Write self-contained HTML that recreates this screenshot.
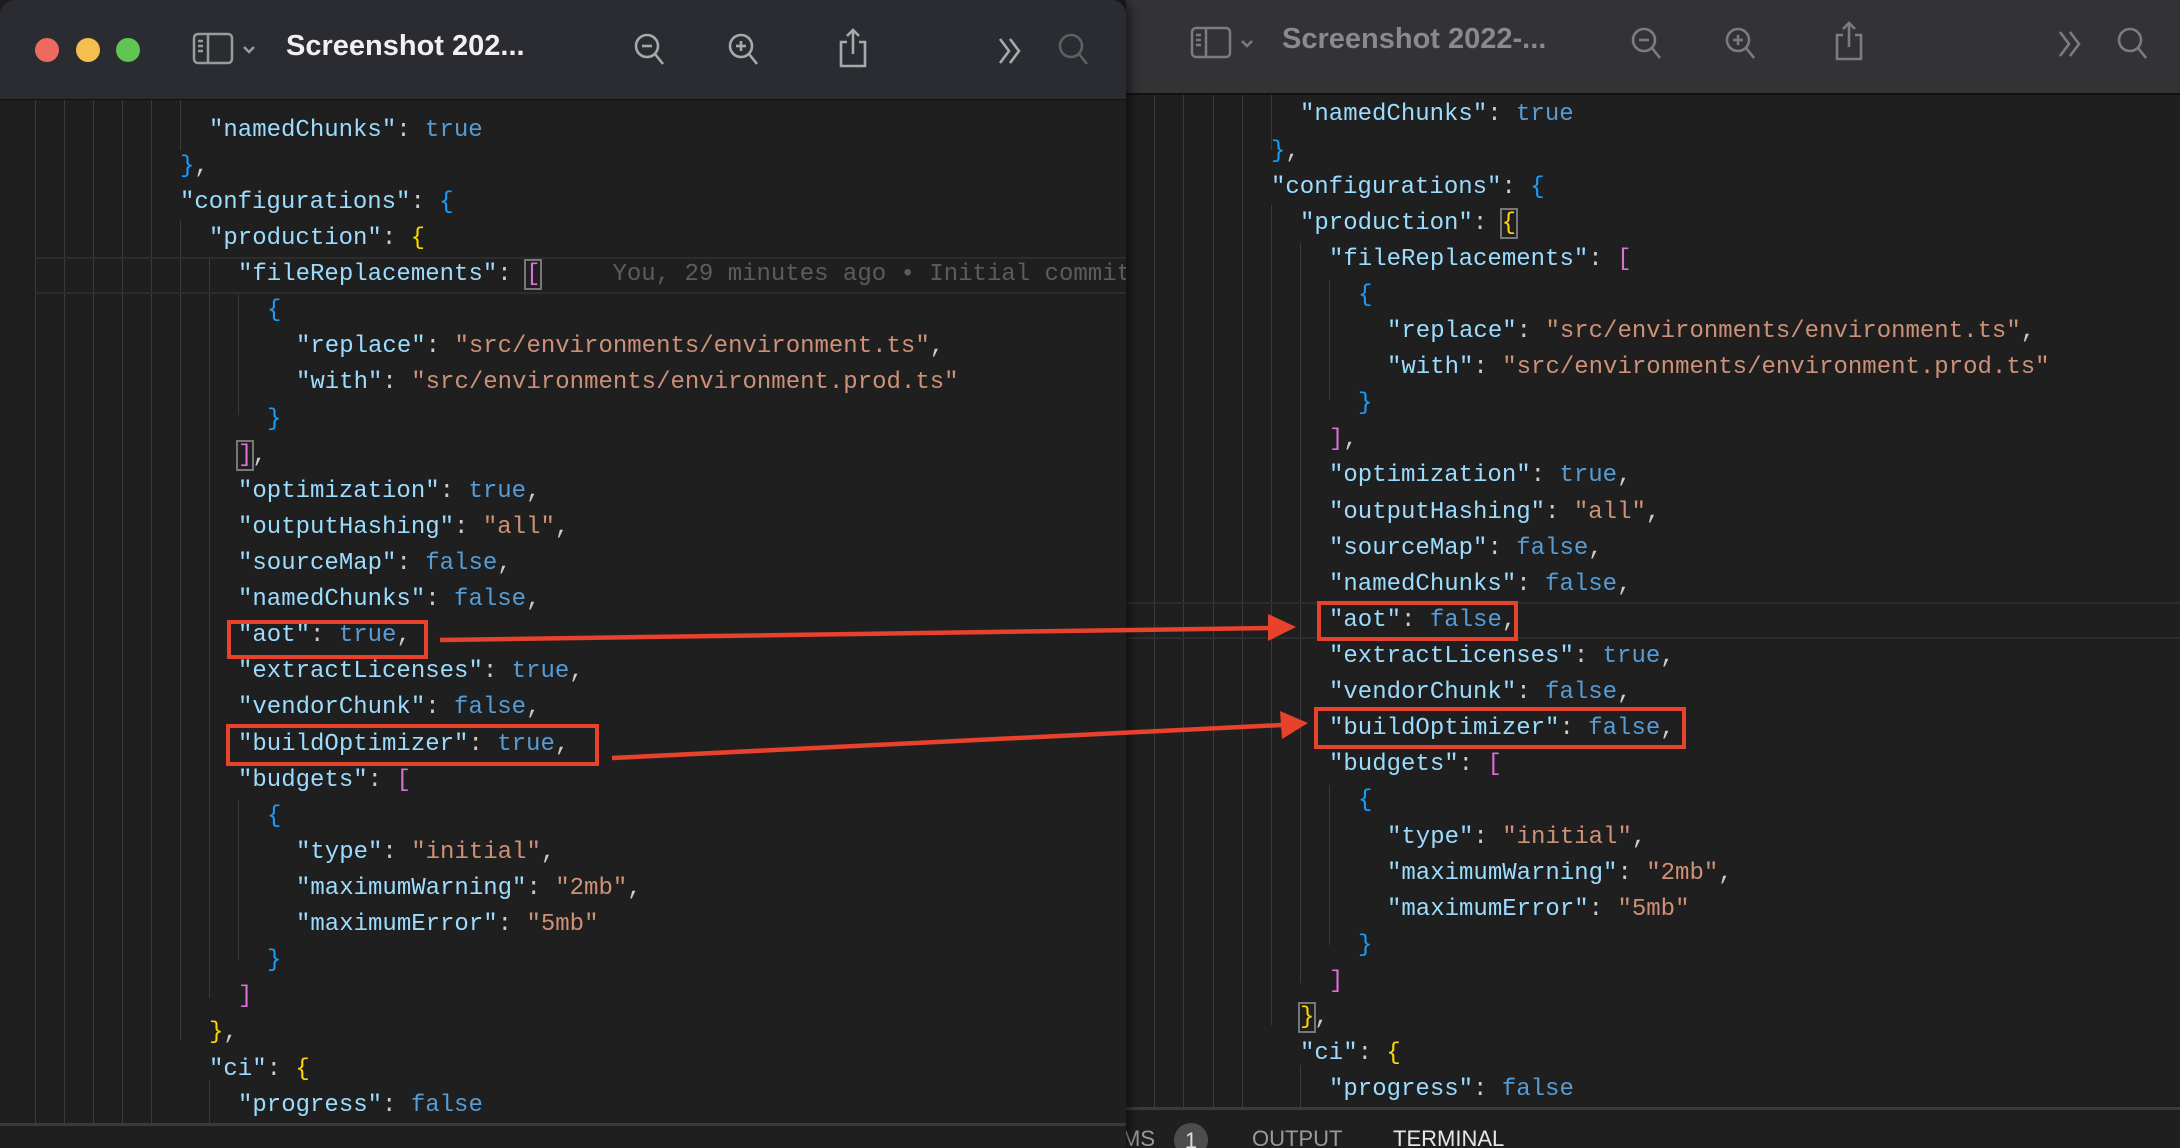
<!DOCTYPE html>
<html><head><meta charset="utf-8"><style>
*{margin:0;padding:0;box-sizing:border-box}
body{width:2180px;height:1148px;overflow:hidden;background:#1e1e1e;position:relative;font-family:"Liberation Mono",monospace}
.win{position:absolute;top:0;overflow:hidden}
#L{left:0;width:1126px;height:1148px;background:#1f1f1f;border-radius:14px 14px 0 0;z-index:2;box-shadow:4px 0 10px rgba(0,0,0,.5)}
#R{left:1126px;width:1054px;height:1148px;background:#1f1f1f;z-index:1}
.tb{position:absolute;left:0;top:0;width:100%;}
#L .tb{height:100px;background:#2a2c31;border-bottom:1px solid #111}
#R .tb{height:95px;background:#333335;border-bottom:2px solid #111}
.code{position:absolute;left:0;width:100%;font-size:24px}
.ln{height:36.12px;line-height:36px;position:relative;white-space:pre}
.k{color:#9cdcfe}.p{color:#cccccc}.b{color:#569cd6}.s{color:#ce9178}.y{color:#ffd700}.bl{color:#179fff}.pk{color:#da70d6}
.g{position:absolute;width:1px;background:#3b3b3b}
.title{position:absolute;font-family:"Liberation Sans",sans-serif;font-weight:bold;font-size:29px}
.ic{position:absolute}
.panel{position:absolute;left:0;width:100%;background:#1f1f1f;border-top:3px solid #3a3a3a}
.box{position:absolute;border:4px solid #e8412c;z-index:5}
</style></head><body>

<div class="win" id="L">
  <div class="g" style="left:35px;top:100px;height:1025px"></div>
  <div class="g" style="left:64px;top:100px;height:1025px"></div>
  <div class="g" style="left:93px;top:100px;height:1025px"></div>
  <div class="g" style="left:122px;top:100px;height:1025px"></div>
  <div class="g" style="left:151px;top:100px;height:1025px"></div>
  <div class="g" style="left:180px;top:100px;height:50px"></div>
  <div class="g" style="left:180px;top:220px;height:820px"></div>
  <div class="g" style="left:209px;top:258px;height:740px"></div>
  <div class="g" style="left:209px;top:1080px;height:45px"></div>
  <div class="g" style="left:238px;top:295px;height:120px"></div>
  <div class="g" style="left:238px;top:800px;height:160px"></div>
  <div style="position:absolute;left:35px;top:257px;width:1100px;height:37px;border-top:2px solid #2c2c2c;border-bottom:2px solid #2c2c2c"></div>
  <div class="code" style="top:112.7px"><div class="ln" style="padding-left:209px"><span class="k">"namedChunks"</span><span class="p">: </span><span class="b">true</span></div><div class="ln" style="padding-left:180px"><span class="bl">}</span><span class="p">,</span></div><div class="ln" style="padding-left:180px"><span class="k">"configurations"</span><span class="p">: </span><span class="bl">{</span></div><div class="ln" style="padding-left:209px"><span class="k">"production"</span><span class="p">: </span><span class="y">{</span></div><div class="ln" style="padding-left:238px"><span class="k">"fileReplacements"</span><span class="p">: </span><span class="pk" style="outline:2px solid #777">[</span><span style="color:#5c5c5c">     You, 29 minutes ago • Initial commit</span></div><div class="ln" style="padding-left:267px"><span class="bl">{</span></div><div class="ln" style="padding-left:296px"><span class="k">"replace"</span><span class="p">: </span><span class="s">"src/environments/environment.ts"</span><span class="p">,</span></div><div class="ln" style="padding-left:296px"><span class="k">"with"</span><span class="p">: </span><span class="s">"src/environments/environment.prod.ts"</span></div><div class="ln" style="padding-left:267px"><span class="bl">}</span></div><div class="ln" style="padding-left:238px"><span class="pk" style="outline:2px solid #777">]</span><span class="p">,</span></div><div class="ln" style="padding-left:238px"><span class="k">"optimization"</span><span class="p">: </span><span class="b">true</span><span class="p">,</span></div><div class="ln" style="padding-left:238px"><span class="k">"outputHashing"</span><span class="p">: </span><span class="s">"all"</span><span class="p">,</span></div><div class="ln" style="padding-left:238px"><span class="k">"sourceMap"</span><span class="p">: </span><span class="b">false</span><span class="p">,</span></div><div class="ln" style="padding-left:238px"><span class="k">"namedChunks"</span><span class="p">: </span><span class="b">false</span><span class="p">,</span></div><div class="ln" style="padding-left:238px"><span class="k">"aot"</span><span class="p">: </span><span class="b">true</span><span class="p">,</span></div><div class="ln" style="padding-left:238px"><span class="k">"extractLicenses"</span><span class="p">: </span><span class="b">true</span><span class="p">,</span></div><div class="ln" style="padding-left:238px"><span class="k">"vendorChunk"</span><span class="p">: </span><span class="b">false</span><span class="p">,</span></div><div class="ln" style="padding-left:238px"><span class="k">"buildOptimizer"</span><span class="p">: </span><span class="b">true</span><span class="p">,</span></div><div class="ln" style="padding-left:238px"><span class="k">"budgets"</span><span class="p">: </span><span class="pk">[</span></div><div class="ln" style="padding-left:267px"><span class="bl">{</span></div><div class="ln" style="padding-left:296px"><span class="k">"type"</span><span class="p">: </span><span class="s">"initial"</span><span class="p">,</span></div><div class="ln" style="padding-left:296px"><span class="k">"maximumWarning"</span><span class="p">: </span><span class="s">"2mb"</span><span class="p">,</span></div><div class="ln" style="padding-left:296px"><span class="k">"maximumError"</span><span class="p">: </span><span class="s">"5mb"</span></div><div class="ln" style="padding-left:267px"><span class="bl">}</span></div><div class="ln" style="padding-left:238px"><span class="pk">]</span></div><div class="ln" style="padding-left:209px"><span class="y">}</span><span class="p">,</span></div><div class="ln" style="padding-left:209px"><span class="k">"ci"</span><span class="p">: </span><span class="y">{</span></div><div class="ln" style="padding-left:238px"><span class="k">"progress"</span><span class="p">: </span><span class="b">false</span></div></div>
  <div class="panel" style="top:1123px;height:30px"></div>
  <div class="tb">
    <div style="position:absolute;left:35px;top:38px;width:24px;height:24px;border-radius:50%;background:#ee6a5e"></div>
    <div style="position:absolute;left:76px;top:38px;width:24px;height:24px;border-radius:50%;background:#f5bf4f"></div>
    <div style="position:absolute;left:116px;top:38px;width:24px;height:24px;border-radius:50%;background:#61c554"></div>
    <svg class="ic" style="left:192px;top:32px" width="70" height="34" viewBox="0 0 70 34" fill="none" stroke="#9a9b9e" stroke-width="2.5"><rect x="2" y="2" width="38" height="29" rx="4"/><line x1="16" y1="2" x2="16" y2="31"/><line x1="6" y1="9" x2="11" y2="9"/><line x1="6" y1="14" x2="11" y2="14"/><line x1="6" y1="19" x2="11" y2="19"/><path d="M52 15l5 5 5-5"/></svg>
    <div class="title" style="left:286px;top:30px;color:#f0f0f0">Screenshot 202...</div>
    <svg class="ic" style="left:633px;top:32px" width="38" height="36" viewBox="0 0 38 36" fill="none" stroke="#a8a9ac" stroke-width="2.6"><circle cx="14" cy="14" r="11"/><line x1="9" y1="14" x2="19" y2="14"/><line x1="22" y1="22" x2="30" y2="32"/></svg>
    <svg class="ic" style="left:727px;top:32px" width="38" height="36" viewBox="0 0 38 36" fill="none" stroke="#a8a9ac" stroke-width="2.6"><circle cx="14" cy="14" r="11"/><line x1="9" y1="14" x2="19" y2="14"/><line x1="14" y1="9" x2="14" y2="19"/><line x1="22" y1="22" x2="30" y2="32"/></svg>
    <svg class="ic" style="left:837px;top:27px" width="32" height="42" viewBox="0 0 32 42" fill="none" stroke="#a8a9ac" stroke-width="2.6"><path d="M10 15H4v24h24V15h-6"/><line x1="16" y1="3" x2="16" y2="27"/><path d="M10 9l6-6 6 6"/></svg>
    <svg class="ic" style="left:996px;top:36px" width="30" height="30" viewBox="0 0 30 30" fill="none" stroke="#a8a9ac" stroke-width="2.6"><path d="M4 3l9 12-9 12M14 3l9 12-9 12"/></svg>
    <svg class="ic" style="left:1057px;top:32px" width="38" height="36" viewBox="0 0 38 36" fill="none" stroke="#5e5f63" stroke-width="2.6"><circle cx="14" cy="14" r="11"/><line x1="22" y1="22" x2="30" y2="32"/></svg>
  </div>
</div>

<div class="win" id="R">
  <div class="g" style="left:28px;top:95px;height:1013px"></div>
  <div class="g" style="left:57px;top:95px;height:1013px"></div>
  <div class="g" style="left:87px;top:95px;height:1013px"></div>
  <div class="g" style="left:116px;top:95px;height:1013px"></div>
  <div class="g" style="left:145px;top:95px;height:55px"></div>
  <div class="g" style="left:145px;top:205px;height:820px"></div>
  <div class="g" style="left:174px;top:243px;height:740px"></div>
  <div class="g" style="left:174px;top:1065px;height:43px"></div>
  <div class="g" style="left:203px;top:280px;height:120px"></div>
  <div class="g" style="left:203px;top:785px;height:160px"></div>
  <div style="position:absolute;left:0;top:602px;width:1054px;height:37px;border-top:2px solid #2c2c2c;border-bottom:2px solid #2c2c2c"></div>
  <div class="code" style="top:97.4px"><div class="ln" style="padding-left:174px"><span class="k">"namedChunks"</span><span class="p">: </span><span class="b">true</span></div><div class="ln" style="padding-left:145px"><span class="bl">}</span><span class="p">,</span></div><div class="ln" style="padding-left:145px"><span class="k">"configurations"</span><span class="p">: </span><span class="bl">{</span></div><div class="ln" style="padding-left:174px"><span class="k">"production"</span><span class="p">: </span><span class="y" style="outline:2px solid #777">{</span></div><div class="ln" style="padding-left:203px"><span class="k">"fileReplacements"</span><span class="p">: </span><span class="pk">[</span></div><div class="ln" style="padding-left:232px"><span class="bl">{</span></div><div class="ln" style="padding-left:261px"><span class="k">"replace"</span><span class="p">: </span><span class="s">"src/environments/environment.ts"</span><span class="p">,</span></div><div class="ln" style="padding-left:261px"><span class="k">"with"</span><span class="p">: </span><span class="s">"src/environments/environment.prod.ts"</span></div><div class="ln" style="padding-left:232px"><span class="bl">}</span></div><div class="ln" style="padding-left:203px"><span class="pk">]</span><span class="p">,</span></div><div class="ln" style="padding-left:203px"><span class="k">"optimization"</span><span class="p">: </span><span class="b">true</span><span class="p">,</span></div><div class="ln" style="padding-left:203px"><span class="k">"outputHashing"</span><span class="p">: </span><span class="s">"all"</span><span class="p">,</span></div><div class="ln" style="padding-left:203px"><span class="k">"sourceMap"</span><span class="p">: </span><span class="b">false</span><span class="p">,</span></div><div class="ln" style="padding-left:203px"><span class="k">"namedChunks"</span><span class="p">: </span><span class="b">false</span><span class="p">,</span></div><div class="ln" style="padding-left:203px"><span class="k">"aot"</span><span class="p">: </span><span class="b">false</span><span class="p">,</span></div><div class="ln" style="padding-left:203px"><span class="k">"extractLicenses"</span><span class="p">: </span><span class="b">true</span><span class="p">,</span></div><div class="ln" style="padding-left:203px"><span class="k">"vendorChunk"</span><span class="p">: </span><span class="b">false</span><span class="p">,</span></div><div class="ln" style="padding-left:203px"><span class="k">"buildOptimizer"</span><span class="p">: </span><span class="b">false</span><span class="p">,</span></div><div class="ln" style="padding-left:203px"><span class="k">"budgets"</span><span class="p">: </span><span class="pk">[</span></div><div class="ln" style="padding-left:232px"><span class="bl">{</span></div><div class="ln" style="padding-left:261px"><span class="k">"type"</span><span class="p">: </span><span class="s">"initial"</span><span class="p">,</span></div><div class="ln" style="padding-left:261px"><span class="k">"maximumWarning"</span><span class="p">: </span><span class="s">"2mb"</span><span class="p">,</span></div><div class="ln" style="padding-left:261px"><span class="k">"maximumError"</span><span class="p">: </span><span class="s">"5mb"</span></div><div class="ln" style="padding-left:232px"><span class="bl">}</span></div><div class="ln" style="padding-left:203px"><span class="pk">]</span></div><div class="ln" style="padding-left:174px"><span class="y" style="outline:2px solid #777">}</span><span class="p">,</span></div><div class="ln" style="padding-left:174px"><span class="k">"ci"</span><span class="p">: </span><span class="y">{</span></div><div class="ln" style="padding-left:203px"><span class="k">"progress"</span><span class="p">: </span><span class="b">false</span></div></div>
  <div class="panel" style="top:1107px;height:45px;font-family:'Liberation Sans',sans-serif;font-size:22px;color:#9a9a9a">
    <span style="position:absolute;left:-4px;top:16px">MS</span>
    <span style="position:absolute;left:48px;top:13px;width:34px;height:34px;border-radius:50%;background:#4d4d4d;color:#ddd;text-align:center;line-height:36px">1</span>
    <span style="position:absolute;left:126px;top:16px">OUTPUT</span>
    <span style="position:absolute;left:267px;top:16px;color:#e6e6e6">TERMINAL</span>
  </div>
  <div class="tb">
    <svg class="ic" style="left:64px;top:26px" width="70" height="34" viewBox="0 0 70 34" fill="none" stroke="#7c7c7f" stroke-width="2.5"><rect x="2" y="2" width="38" height="29" rx="4"/><line x1="16" y1="2" x2="16" y2="31"/><line x1="6" y1="9" x2="11" y2="9"/><line x1="6" y1="14" x2="11" y2="14"/><line x1="6" y1="19" x2="11" y2="19"/><path d="M52 15l5 5 5-5"/></svg>
    <div class="title" style="left:156px;top:23px;color:#8a8a8c">Screenshot 2022-...</div>
    <svg class="ic" style="left:504px;top:26px" width="38" height="36" viewBox="0 0 38 36" fill="none" stroke="#7c7c7f" stroke-width="2.6"><circle cx="14" cy="14" r="11"/><line x1="9" y1="14" x2="19" y2="14"/><line x1="22" y1="22" x2="30" y2="32"/></svg>
    <svg class="ic" style="left:598px;top:26px" width="38" height="36" viewBox="0 0 38 36" fill="none" stroke="#7c7c7f" stroke-width="2.6"><circle cx="14" cy="14" r="11"/><line x1="9" y1="14" x2="19" y2="14"/><line x1="14" y1="9" x2="14" y2="19"/><line x1="22" y1="22" x2="30" y2="32"/></svg>
    <svg class="ic" style="left:707px;top:20px" width="32" height="42" viewBox="0 0 32 42" fill="none" stroke="#7c7c7f" stroke-width="2.6"><path d="M10 15H4v24h24V15h-6"/><line x1="16" y1="3" x2="16" y2="27"/><path d="M10 9l6-6 6 6"/></svg>
    <svg class="ic" style="left:930px;top:29px" width="30" height="30" viewBox="0 0 30 30" fill="none" stroke="#7c7c7f" stroke-width="2.6"><path d="M4 3l9 12-9 12M14 3l9 12-9 12"/></svg>
    <svg class="ic" style="left:990px;top:26px" width="38" height="36" viewBox="0 0 38 36" fill="none" stroke="#7c7c7f" stroke-width="2.6"><circle cx="14" cy="14" r="11"/><line x1="22" y1="22" x2="30" y2="32"/></svg>
  </div>
</div>

<div class="box" style="left:227px;top:620px;width:201px;height:39px"></div>
<div class="box" style="left:226px;top:724px;width:373px;height:42px"></div>
<div class="box" style="left:1317px;top:601px;width:201px;height:40px"></div>
<div class="box" style="left:1314px;top:707px;width:372px;height:42px"></div>
<svg style="position:absolute;left:0;top:0;z-index:6" width="2180" height="1148">
  <g stroke="#e8412c" stroke-width="4.5" fill="#e8412c">
    <line x1="440" y1="640" x2="1270" y2="628"/>
    <polygon points="1296,627 1268,614 1268,641" stroke="none"/>
    <line x1="612" y1="758" x2="1282" y2="725"/>
    <polygon points="1308,723 1280,711 1282,739" stroke="none"/>
  </g>
</svg>
</body></html>
